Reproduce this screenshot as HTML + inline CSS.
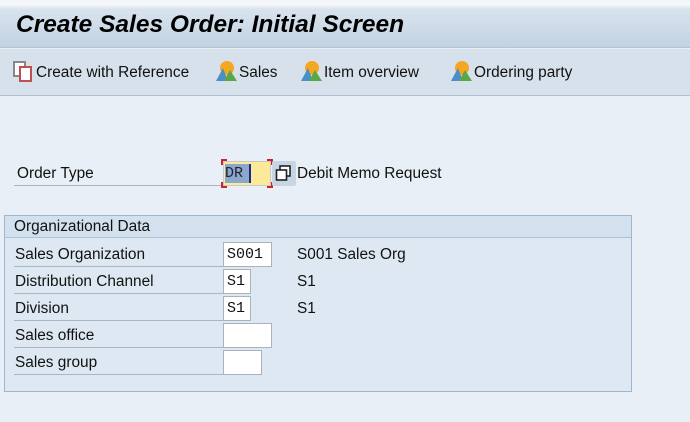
<!DOCTYPE html>
<html><head><style>
*{margin:0;padding:0;box-sizing:border-box}
body{width:690px;height:422px;overflow:hidden;background:#e8eff6;font-family:"Liberation Sans","DejaVu Sans",sans-serif;font-size:15.4px;color:#111;position:relative}
.abs{position:absolute}
#title{left:0;top:0;width:690px;height:48px;background:linear-gradient(#f4f7fa 0,#f4f7fa 5px,#d8e3ee 9px,#c3d3e3 46px);border-bottom:1px solid #b3c3d3}
#title span{position:absolute;left:16px;top:11px;font-weight:bold;font-style:italic;font-size:24.5px;color:#000;white-space:nowrap}
#tb{left:0;top:49px;width:690px;height:47px;background:#d6e1ec;border-bottom:1px solid #b0bfcf}
.t{position:absolute;top:15px;white-space:nowrap}
.lbl{position:absolute;left:14px;width:211px;height:27px;border-bottom:1px solid #a9b5c2;white-space:nowrap;line-height:26px;padding-top:2px}
.inp{position:absolute;background:#fff;border:1px solid #a9b3bd;height:25px;font-family:"Liberation Mono",monospace;font-size:15px;line-height:23px;padding-left:3px}
.val{position:absolute;left:297px;white-space:nowrap}
</style></head><body>
<div id="title" class="abs"><span>Create Sales Order: Initial Screen</span></div>
<div id="tb" class="abs">
<svg class="abs" style="left:13px;top:12px" width="22" height="22" viewBox="0 0 22 22"><rect x="1" y="1" width="11" height="14" fill="#fff" stroke="#888" stroke-width="2"/><rect x="7" y="6" width="11" height="14" fill="#fff" stroke="#c0504d" stroke-width="2"/></svg>
<span class="t" style="left:36px">Create with Reference</span>
<svg class="abs" style="left:215px;top:10px" width="24" height="24" viewBox="0 0 24 24"><circle cx="12" cy="9" r="7" fill="#f5a623"/><path d="M1 22 L8 9 L13 22Z" fill="#4a90c8"/><path d="M9 22 L15 11 L22 22Z" fill="#5aa845"/></svg>
<span class="t" style="left:239px">Sales</span>
<svg class="abs" style="left:300px;top:10px" width="24" height="24" viewBox="0 0 24 24"><circle cx="12" cy="9" r="7" fill="#f5a623"/><path d="M1 22 L8 9 L13 22Z" fill="#4a90c8"/><path d="M9 22 L15 11 L22 22Z" fill="#5aa845"/></svg>
<span class="t" style="left:324px">Item overview</span>
<svg class="abs" style="left:450px;top:10px" width="24" height="24" viewBox="0 0 24 24"><circle cx="12" cy="9" r="7" fill="#f5a623"/><path d="M1 22 L8 9 L13 22Z" fill="#4a90c8"/><path d="M9 22 L15 11 L22 22Z" fill="#5aa845"/></svg>
<span class="t" style="left:474px">Ordering party</span>
</div>

<div class="lbl" style="top:159px;left:14px;width:210px;padding-left:3px">Order Type</div>
<div class="abs" style="left:223px;top:161px;width:48px;height:25px;background:#fde99a;border:1px solid #c9c9c9"></div>
<div class="abs" style="left:225px;top:164px;width:25px;height:19px;background:#8aa7cc;font-family:'Liberation Mono',monospace;font-size:15px;line-height:19px;color:#223">DR</div>
<div class="abs" style="left:249px;top:164px;width:2px;height:19px;background:#1c2a8c"></div>
<div class="abs" style="left:221px;top:159px;width:6px;height:6px;border-left:2px solid #d0202a;border-top:2px solid #d0202a"></div>
<div class="abs" style="left:267px;top:159px;width:6px;height:6px;border-right:2px solid #d0202a;border-top:2px solid #d0202a"></div>
<div class="abs" style="left:221px;top:182px;width:6px;height:6px;border-left:2px solid #d0202a;border-bottom:2px solid #d0202a"></div>
<div class="abs" style="left:267px;top:182px;width:6px;height:6px;border-right:2px solid #d0202a;border-bottom:2px solid #d0202a"></div>
<div class="abs" style="left:272px;top:161px;width:24px;height:25px;background:#c8d5e3;border-radius:2px"></div>
<svg class="abs" style="left:275px;top:165px" width="17" height="17" viewBox="0 0 17 17"><rect x="5" y="1" width="10" height="10" fill="#fff" stroke="#222" stroke-width="1.6"/><rect x="1.5" y="5" width="10" height="10" fill="#fff" stroke="#222" stroke-width="1.6"/></svg>
<span class="abs" style="left:297px;top:165px">Debit Memo Request</span>

<div class="abs" style="left:4px;top:215px;width:628px;height:177px;background:#dde8f3;border:1px solid #9fb6cf"></div>
<div class="abs" style="left:5px;top:216px;width:626px;height:22px;background:#d3e0ed;border-bottom:1px solid #afc1d4"></div>
<span class="abs" style="left:14px;top:218px">Organizational Data</span>

<div class="lbl" style="top:240px;padding-left:1px">Sales Organization</div>
<div class="inp" style="left:223px;top:242px;width:49px">S001</div>
<div class="val" style="top:246px">S001 Sales Org</div>
<div class="lbl" style="top:267px;padding-left:1px">Distribution Channel</div>
<div class="inp" style="left:223px;top:269px;width:28px">S1</div>
<div class="val" style="top:273px">S1</div>
<div class="lbl" style="top:294px;padding-left:1px">Division</div>
<div class="inp" style="left:223px;top:296px;width:28px">S1</div>
<div class="val" style="top:300px">S1</div>
<div class="lbl" style="top:321px;padding-left:1px">Sales office</div>
<div class="inp" style="left:223px;top:323px;width:49px"></div>
<div class="lbl" style="top:348px;padding-left:1px">Sales group</div>
<div class="inp" style="left:223px;top:350px;width:39px"></div>
</body></html>
